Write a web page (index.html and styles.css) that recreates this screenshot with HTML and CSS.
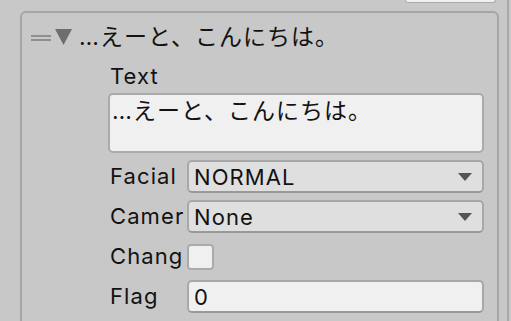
FILE: index.html
```html
<!DOCTYPE html>
<html lang="ja">
<head>
<meta charset="utf-8">
<link rel="stylesheet" href="styles.css">
</head>
<body>
<div class="page">
  <div class="main">
    <div class="prev-field"></div>
    <div class="panel">
      <div class="header">
        <span class="handle"><i></i><i></i></span>
        <svg class="fold" width="17" height="16" viewBox="0 0 17 16"><polygon points="0,0 17,0 8.5,16" fill="#6e6e6e"/></svg>
        <span class="title jp">…えーと、こんにちは。</span>
      </div>
      <div class="props">
        <div class="label top">Text</div>
        <div class="textarea jp">…えーと、こんにちは。</div>
        <div class="row">
          <div class="label">Facial</div>
          <div class="dropdown"><span>NORMAL</span><svg width="14" height="8" viewBox="0 0 14 8"><polygon points="0,0 14,0 7,8" fill="#555"/></svg></div>
        </div>
        <div class="row">
          <div class="label">Camer</div>
          <div class="dropdown"><span>None</span><svg width="14" height="8" viewBox="0 0 14 8"><polygon points="0,0 14,0 7,8" fill="#555"/></svg></div>
        </div>
        <div class="row">
          <div class="label">Chang</div>
          <div class="checkbox"></div>
        </div>
        <div class="row">
          <div class="label">Flag</div>
          <div class="textfield">0</div>
        </div>
      </div>
    </div>
  </div>
  <div class="scroll-line"></div>
</div>
</body>
</html>
```
FILE: styles.css
```css
html, body {
  margin: 0;
  padding: 0;
  background: #c8c8c8;
  height: 100%;
  overflow: hidden;
}
body {
  font-family: Inter, "Noto Sans CJK JP", sans-serif;
  color: #121212;
  font-size: 22px;
  letter-spacing: 1.1px;
}
.page {
  display: flex;
  height: 321px;
}
.main {
  width: 507px;
  flex: none;
}
.scroll-line {
  width: 2px;
  background: #a9a9a9;
  flex: none;
}
.prev-field {
  margin-left: 405px;
  width: 89px;
  height: 2px;
  background: #f0f0f0;
  border: 1px solid #ababab;
  border-top: none;
  border-radius: 0 0 4px 4px;
}
.panel {
  margin-left: 20px;
  margin-top: 8px;
  width: 475px;
  height: 340px;
  border: 2px solid #a6a6a6;
  border-radius: 6px;
  box-sizing: content-box;
}
.header {
  display: flex;
  align-items: center;
  height: 28px;
  margin-top: 10px;
  padding-left: 9px;
}
.handle {
  display: flex;
  flex-direction: column;
  gap: 2px;
  width: 20px;
  margin-top: 1px;
}
.handle i {
  display: block;
  height: 2px;
  background: #8e8e8e;
}
.fold {
  margin-left: 4px;
}
.jp {
  font-size: 23px;
  letter-spacing: 1px;
}
.title {
  margin-left: 7px;
  line-height: 28px;
}
.props {
  margin-left: 86px;
  margin-right: 13px;
  margin-top: 12px;
}
.label {
  width: 79px;
  flex: none;
  padding-left: 2px;
  box-sizing: border-box;
  white-space: nowrap;
  overflow: hidden;
  line-height: 33px;
}
.label.top {
  line-height: 26px;
  height: 26px;
}
.textarea {
  margin-top: 4px;
  height: 50px;
  background: #f0f0f0;
  border: 2px solid #aaaaaa;
  border-radius: 5px;
  padding: 3px 5px 3px 2px;
  box-sizing: content-box;
  line-height: 26px;
  width: 365px;
}
.row {
  display: flex;
  align-items: center;
  height: 33px;
  margin-top: 7px;
}
.dropdown, .textfield {
  flex: 1;
  height: 29px;
  border: 2px solid #a8a8a8;
  border-bottom-color: #999;
  border-radius: 5px;
  display: flex;
  align-items: center;
  padding: 0 10px 0 5px;
}
.dropdown {
  background: #dfdfdf;
  justify-content: space-between;
}
.textfield {
  background: #f0f0f0;
}
.checkbox {
  width: 23px;
  height: 22px;
  background: #f0f0f0;
  border: 2px solid #ababab;
  border-radius: 4px;
}
```
